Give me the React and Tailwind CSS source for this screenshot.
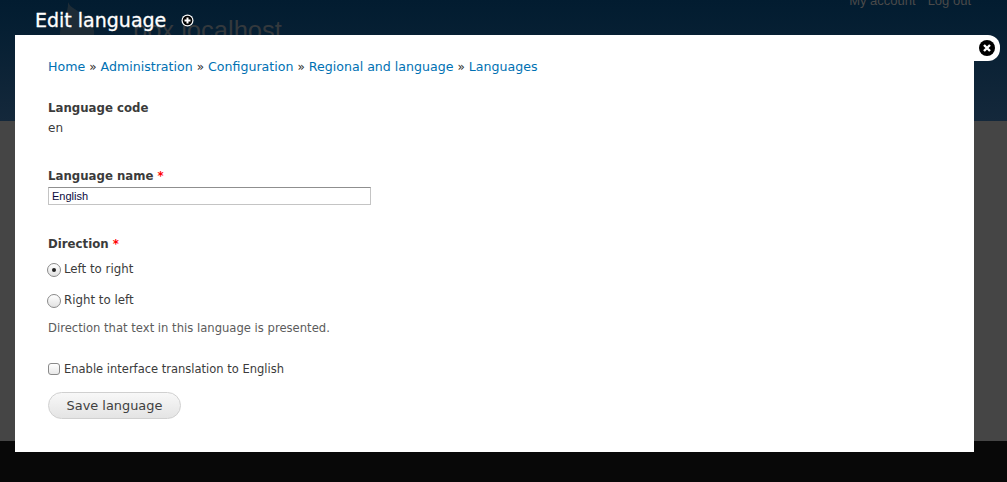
import React from 'react';

const Crumb = ({ children }) => (
  <a href="#" className="text-[12.6px] text-[#0071b3]">
    {children}
  </a>
);

const Sep = () => <span className="text-[#2a2a2a] text-[12px] mx-[4px]">»</span>;

const App = () => {
  return (
    <div className="relative h-[482px] w-[1007px] overflow-hidden flex flex-col bg-[#080808] font-['DejaVu_Sans',sans-serif]">
      {/* page behind the overlay */}
      <div className="h-[121px] flex justify-between bg-gradient-to-b from-[#021c30] to-[#14283b]">
        <div className="flex items-start pl-[57px]">
          <svg width="40" height="36" viewBox="0 0 40 36">
            <path d="M11 2c2 6 10 8 17 14 8 7 10 14 9 20H3C2 24 12 14 11 2z" fill="#1e2c36" />
          </svg>
          <span className="ml-[36px] mt-[16px] text-[25.5px] leading-[28px] text-[#34393d] font-['Liberation_Sans',sans-serif]">
            box.localhost
          </span>
        </div>
        <div className="flex gap-[12px] pr-[36px] -mt-[7px] text-[13px] leading-[15px] h-[15px] text-[#4a4a4a] font-['Liberation_Sans',sans-serif]">
          <span>My account</span>
          <span>Log out</span>
        </div>
      </div>
      <div className="h-[320px] bg-[#454545]" />

      {/* overlay title */}
      <div className="absolute left-[35px] top-[7px] flex items-center">
        <h1 className="text-[19px] leading-[26px] font-normal text-white [-webkit-text-stroke:0.3px_white]">
          Edit language
        </h1>
        <svg width="13" height="13" viewBox="0 0 13 13" className="ml-[15px]">
          <circle cx="6.5" cy="6.5" r="6" fill="#fff" />
          <circle cx="6.5" cy="6.5" r="4.8" fill="#000" />
          <path d="M6.5 3.5v6M3.5 6.5h6" stroke="#fff" strokeWidth="2" />
        </svg>
      </div>

      {/* close tab */}
      <div className="absolute left-[974px] top-[35px] w-[26px] h-[26px] bg-white rounded-r-[12px] flex items-center justify-start">
        <svg width="16" height="16" viewBox="0 0 16 16" className="ml-[5px]">
          <circle cx="8" cy="8" r="8" fill="#000" />
          <path d="M5 5l6 6M11 5l-6 6" stroke="#fff" strokeWidth="2.4" />
        </svg>
      </div>

      {/* overlay content */}
      <div className="absolute left-[15px] top-[35px] w-[959px] h-[417px] bg-white pl-[33px] pt-[23px] text-[11.5px] leading-[18px] text-[#3b3b3b]">
        <div className="h-[18px] flex items-center whitespace-nowrap">
          <Crumb>Home</Crumb>
          <Sep />
          <Crumb>Administration</Crumb>
          <Sep />
          <Crumb>Configuration</Crumb>
          <Sep />
          <Crumb>Regional and language</Crumb>
          <Sep />
          <Crumb>Languages</Crumb>
        </div>

        <div className="mt-[23px] text-[11.75px] font-bold">Language code</div>
        <div className="mt-[2px] text-[12px]">en</div>

        <div className="mt-[30px] text-[11.75px] font-bold">
          Language name <span className="text-[#f00]">*</span>
        </div>
        <input
          readOnly
          value="English"
          className="block mt-[2px] w-[323px] h-[18px] border border-[#c4c4c4] border-t-[#8f8f8f] px-[3px] text-[11px] text-[#0a0a3c] font-['Liberation_Sans',sans-serif] outline-none"
        />

        <div className="mt-[30px] text-[11.75px] font-bold">
          Direction <span className="text-[#f00]">*</span>
        </div>
        <label className="mt-[7px] flex items-center h-[18px] text-[11.8px]">
          <span className="w-[14px] h-[14px] mt-[2px] -ml-[1px] mr-[3px] rounded-full border border-[#8a8a8a] bg-gradient-to-b from-white to-[#e2e2e2] flex items-center justify-center">
            <span className="w-[4px] h-[4px] rounded-full bg-[#222]" />
          </span>
          Left to right
        </label>
        <label className="mt-[13px] flex items-center h-[18px] text-[11.8px]">
          <span className="w-[14px] h-[14px] mt-[2px] -ml-[1px] mr-[3px] rounded-full border border-[#8a8a8a] bg-gradient-to-b from-white to-[#e2e2e2]" />
          Right to left
        </label>
        <div className="mt-[10px] text-[11.6px] text-[#5c5c5c]">Direction that text in this language is presented.</div>

        <label className="mt-[23px] flex items-center h-[18px]">
          <span className="w-[12px] h-[12px] mr-[4px] rounded-[3px] border border-[#8a8a8a] bg-gradient-to-b from-white to-[#e8e8e8]" />
          Enable interface translation to English
        </label>

        <button className="block mt-[14px] w-[133px] h-[27px] pt-[1px] rounded-[14px] border border-[#d0d0d0] bg-gradient-to-b from-[#f8f8f8] to-[#e4e4e4] text-[12.9px] text-[#404040]">
          Save language
        </button>
      </div>
    </div>
  );
};

export default App;
